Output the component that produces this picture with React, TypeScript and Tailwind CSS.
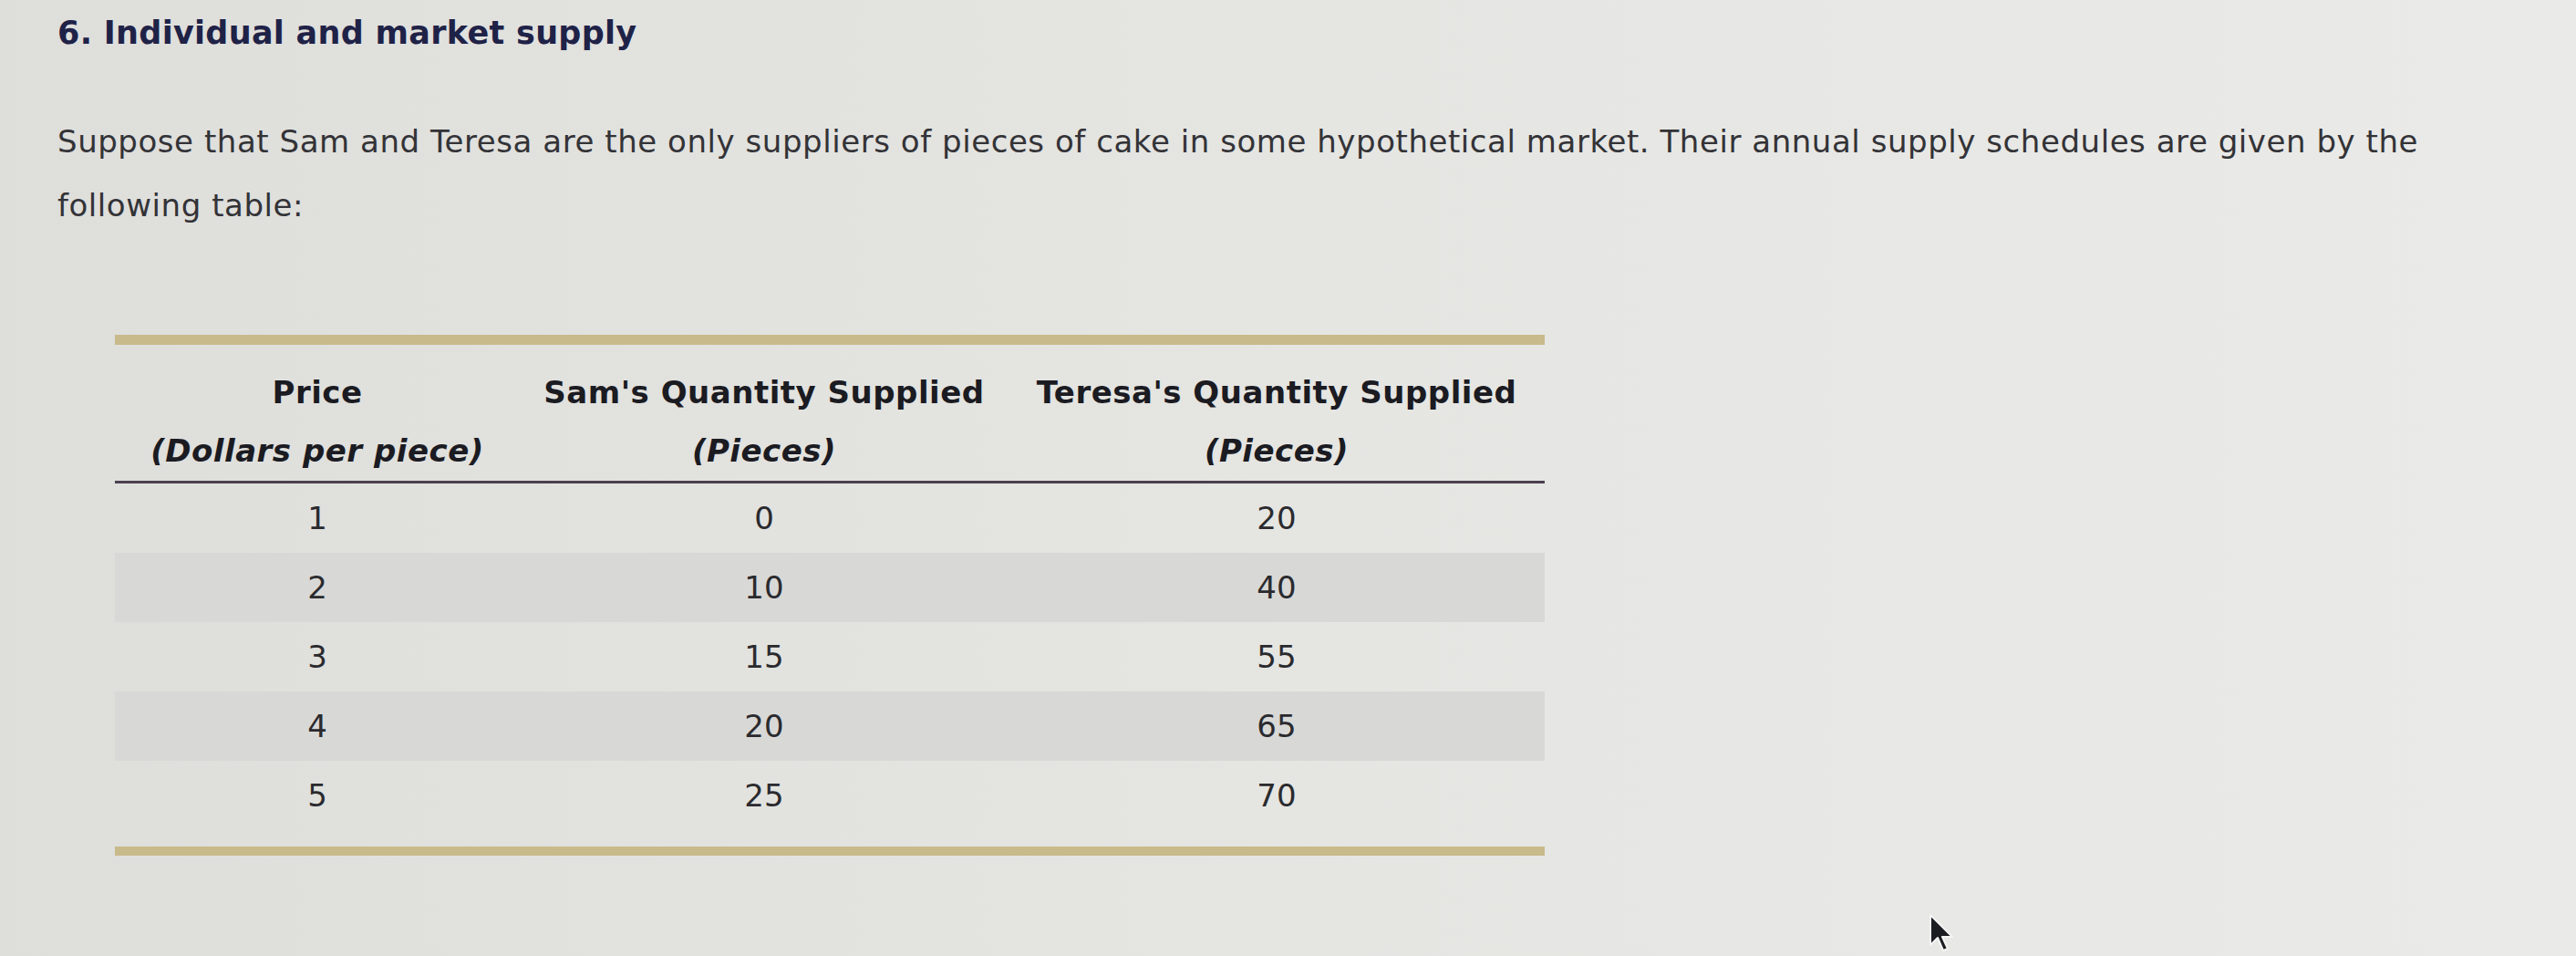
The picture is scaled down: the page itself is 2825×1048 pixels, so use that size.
import React from "react";

const rows = [
  ["1", "0", "20"],
  ["2", "10", "40"],
  ["3", "15", "55"],
  ["4", "20", "65"],
  ["5", "25", "70"],
];

export default function App() {
  return (
    <div className="relative w-[2825px] h-[1048px] overflow-hidden bg-linear-to-r from-[#dededb] via-[#e5e5e2] to-[#eaeae8] font-['DejaVu_Sans','Verdana',sans-serif]">
      <div className="pl-[63px] pt-[16px]">
        <h1 className="text-[35px] leading-[40px] font-bold tracking-[0.3px] text-[#1f2247]">
          6. Individual and market supply
        </h1>
        <p className="mt-[64px] text-[34px] leading-[70px] tracking-[0.55px] text-[#333337] w-[2740px]">
          Suppose that Sam and Teresa are the only suppliers of pieces of cake in some hypothetical market. Their annual supply schedules are given by the
          <br />
          following table:
        </p>
      </div>

      <div className="ml-[126px] mt-[107px] w-[1568px]">
        <div className="h-[11px] bg-[#c9ba8b]" />
        <div className="grid grid-cols-[444px_536px_588px] pt-[20px] pb-[1px] border-b-[3px] border-[#4b4050] text-[34px] leading-[64px] tracking-[0.5px] text-[#1b1b22] text-center">
          <div>
            <div className="font-bold">Price</div>
            <div className="font-bold italic">(Dollars per piece)</div>
          </div>
          <div>
            <div className="font-bold">Sam's Quantity Supplied</div>
            <div className="font-bold italic">(Pieces)</div>
          </div>
          <div>
            <div className="font-bold">Teresa's Quantity Supplied</div>
            <div className="font-bold italic">(Pieces)</div>
          </div>
        </div>
        {rows.map((r, i) => (
          <div
            key={i}
            className={`grid grid-cols-[444px_536px_588px] h-[76px] text-[34px] leading-[76px] text-center text-[#2a2a2e] ${
              i % 2 === 1 ? "bg-[#d8d8d6]" : ""
            }`}
          >
            <div>{r[0]}</div>
            <div>{r[1]}</div>
            <div>{r[2]}</div>
          </div>
        ))}
        <div className="mt-[18px] h-[10px] bg-[#c9ba8b]" />
      </div>

      <svg
        className="absolute left-[2114px] top-[1000px]"
        width="30"
        height="46"
        viewBox="0 0 30 46"
      >
        <path
          d="M3 3 L3 36 L11 28 L17 42 L22 40 L16 27 L27 27 Z"
          fill="#1c1d22"
          stroke="#f4f4f4"
          strokeWidth="2"
          strokeLinejoin="round"
        />
      </svg>
    </div>
  );
}
